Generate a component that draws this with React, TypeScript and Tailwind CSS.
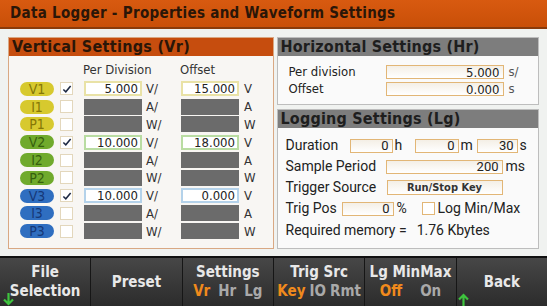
import React from 'react';

type Ch = {
  name: string;
  pill: string;
  text: string;
  ring: string;
  checked: boolean;
  per?: string;
  off?: string;
  unit: string;
};

const rows: Ch[] = [
  { name: 'V1', pill: 'bg-[#d7c92e]', text: 'text-[#857706]', ring: 'border-[#e9e2a6]', checked: true, per: '5.000', off: '15.000', unit: 'V' },
  { name: 'I1', pill: 'bg-[#d7c92e]', text: 'text-[#857706]', ring: '', checked: false, unit: 'A' },
  { name: 'P1', pill: 'bg-[#d7c92e]', text: 'text-[#857706]', ring: '', checked: false, unit: 'W' },
  { name: 'V2', pill: 'bg-[#70aa2c]', text: 'text-[#36600e]', ring: 'border-[#b9dca2]', checked: true, per: '10.000', off: '18.000', unit: 'V' },
  { name: 'I2', pill: 'bg-[#70aa2c]', text: 'text-[#36600e]', ring: '', checked: false, unit: 'A' },
  { name: 'P2', pill: 'bg-[#70aa2c]', text: 'text-[#36600e]', ring: '', checked: false, unit: 'W' },
  { name: 'V3', pill: 'bg-[#2f6ec0]', text: 'text-[#163877]', ring: 'border-[#b4d2ea]', checked: true, per: '10.000', off: '0.000', unit: 'V' },
  { name: 'I3', pill: 'bg-[#2f6ec0]', text: 'text-[#163877]', ring: '', checked: false, unit: 'A' },
  { name: 'P3', pill: 'bg-[#2f6ec0]', text: 'text-[#163877]', ring: '', checked: false, unit: 'W' },
];

const narrow = { fontFamily: '"DejaVu Sans Condensed", "DejaVu Sans", sans-serif' };

function Check() {
  return (
    <svg width="10" height="10" viewBox="0 0 11 11">
      <path d="M1.5 6 L4.2 8.6 L9.5 2.2" fill="none" stroke="#1e2a44" strokeWidth="1.7" />
    </svg>
  );
}

function Box({ checked, className = '' }: { checked?: boolean; className?: string }) {
  return (
    <div className={`w-[13px] h-[13px] bg-white border border-[#e3d7bc] flex items-center justify-center ${className}`}>
      {checked && <Check />}
    </div>
  );
}

function Field({ value, className = '' }: { value: string; className?: string }) {
  return (
    <div className={`h-[14px] bg-gradient-to-b from-[#f4efe6] to-white border border-[#e2b676] flex items-center justify-end pr-[3px] text-[13px] leading-none text-[#222] ${className}`}>
      {value}
    </div>
  );
}

function SoftKey({ top, bottom, children }: { top: string; bottom?: string; children?: React.ReactNode }) {
  return (
    <div className="relative flex-1 flex flex-col items-center justify-center bg-gradient-to-b from-[#474747] to-[#2c2c2c] border-l border-[#161616] first:border-l-0 font-bold text-[15px] leading-[19px] text-[#e8e8e8]">
      <div>{top}</div>
      {bottom && <div>{bottom}</div>}
      {children}
    </div>
  );
}

export default function App() {
  return (
    <div className="w-[547px] h-[306px] flex flex-col overflow-hidden bg-[#f0f2f0] text-[#222]" style={narrow}>
      <div className="h-[29px] shrink-0 bg-gradient-to-b from-[#d85a10] to-[#c94f08] border-b-2 border-[#8a3a0a] flex items-center px-[10px]">
        <span className="font-bold text-[15px] text-[#2a1608] tracking-[0.3px]">Data Logger - Properties and Waveform Settings</span>
      </div>

      <div className="flex-1 flex gap-[3px] px-[8px] pt-[8px]">
        <div className="w-[266px] h-[212px] border border-[#d9a883] bg-[#f8f6f3] flex flex-col">
          <div className="h-[18px] bg-[#c64d0e] flex items-center px-[3px] font-bold text-[16px] tracking-[0.3px] text-[#2a1608]">Vertical Settings (Vr)</div>
          <div className="flex h-[24px] items-end pb-[1px] text-[13px] text-[#333]">
            <div className="ml-[74px] w-[97px]">Per Division</div>
            <div>Offset</div>
          </div>
          <div className="flex flex-col">
            {rows.map((r) => (
              <div key={r.name} className="h-[17.8px] flex items-center">
                <div className={`ml-[11px] w-[34px] h-[14px] rounded-full ${r.pill} ${r.text} flex items-center justify-center text-[14px] leading-none`}>{r.name}</div>
                <Box checked={r.checked} className="ml-[6px]" />
                {r.per ? (
                  <div className={`ml-[11px] w-[58px] h-[15px] bg-white border-2 ${r.ring} flex items-center justify-end pr-[2px] text-[13px] leading-none`}>{r.per}</div>
                ) : (
                  <div className="ml-[11px] w-[58px] h-[16px] bg-[#6b6b6b]" />
                )}
                <div className="w-[39px] pl-[4px] text-[13px] leading-none text-[#333]">{r.unit}/</div>
                {r.off ? (
                  <div className={`w-[58px] h-[15px] bg-white border-2 ${r.ring} flex items-center justify-end pr-[2px] text-[13px] leading-none`}>{r.off}</div>
                ) : (
                  <div className="w-[58px] h-[16px] bg-[#6b6b6b]" />
                )}
                <div className="pl-[5px] text-[13px] leading-none text-[#333]">{r.unit}</div>
              </div>
            ))}
          </div>
        </div>

        <div className="w-[263px] flex flex-col gap-[4px]">
          <div className="h-[68px] border border-[#bdbdbd] bg-[#fafafa] flex flex-col">
            <div className="h-[18px] bg-[#7d7d7d] flex items-center px-[3px] font-bold text-[16px] tracking-[0.2px] text-[#1e1e1e]">Horizontal Settings (Hr)</div>
            <div className="flex flex-col pt-[9px] gap-[3px] text-[13px]">
              <div className="flex items-center h-[14px]">
                <div className="w-[108px] pl-[11px]">Per division</div>
                <Field value="5.000" className="w-[118px]" />
                <div className="pl-[5px] text-[#555]">s/</div>
              </div>
              <div className="flex items-center h-[14px]">
                <div className="w-[108px] pl-[11px]">Offset</div>
                <Field value="0.000" className="w-[118px]" />
                <div className="pl-[5px] text-[#555]">s</div>
              </div>
            </div>
          </div>

          <div className="h-[140px] border border-[#bdbdbd] bg-[#fafafa] flex flex-col text-[14px]" style={{ fontFamily: 'Roboto, "DejaVu Sans", sans-serif' }}>
            <div className="h-[18px] bg-[#7d7d7d] flex items-center px-[3px] font-bold text-[16px] tracking-[0.2px] text-[#1e1e1e]" style={narrow}>Logging Settings (Lg)</div>
            <div className="flex flex-col pt-[10px] pl-[8px] gap-[6px]">
              <div className="flex items-center h-[15px]">
                <div className="w-[64px]">Duration</div>
                <Field value="0" className="w-[43px]" />
                <div className="w-[22px] pl-[2px]">h</div>
                <Field value="0" className="w-[44px]" />
                <div className="w-[18px] pl-[2px]">m</div>
                <Field value="30" className="w-[41px]" />
                <div className="pl-[2px]">s</div>
              </div>
              <div className="flex items-center h-[15px]">
                <div className="w-[100px]">Sample Period</div>
                <Field value="200" className="w-[117px]" />
                <div className="pl-[3px]">ms</div>
              </div>
              <div className="flex items-center h-[15px]">
                <div className="w-[101px]">Trigger Source</div>
                <div className="w-[116px] h-[15px] bg-gradient-to-b from-[#f4efe6] to-white border border-[#e2b676] flex items-center justify-center text-[11px] font-bold leading-none text-[#333]" style={narrow}>Run/Stop Key</div>
              </div>
              <div className="flex items-center h-[15px]">
                <div className="w-[56px]">Trig Pos</div>
                <Field value="0" className="w-[52px]" />
                <div className="w-[28px] pl-[3px]">%</div>
                <div className="w-[13px] h-[13px] bg-white border border-[#e2b676]" />
                <div className="pl-[3px]">Log Min/Max</div>
              </div>
              <div className="flex items-center h-[17px]">
                <div>Required memory =</div>
                <div className="pl-[10px]">1.76 Kbytes</div>
              </div>
            </div>
          </div>
        </div>
      </div>

      <div className="h-[50px] shrink-0 flex border-t-2 border-[#111] bg-[#2a2a2a]">
        <SoftKey top="File" bottom="Selection">
          <svg className="absolute left-[3px] bottom-0" width="11" height="13" viewBox="0 0 11 13">
            <path d="M5.5 0 V11 M1 6.5 L5.5 11 L10 6.5" fill="none" stroke="#3ec43e" strokeWidth="2.2" />
          </svg>
        </SoftKey>
        <SoftKey top="Preset" />
        <SoftKey top="Settings">
          <div className="flex gap-[8px]">
            <span className="text-[#f08a1c]">Vr</span>
            <span className="text-[#a9a9a9]">Hr</span>
            <span className="text-[#a9a9a9]">Lg</span>
          </div>
        </SoftKey>
        <SoftKey top="Trig Src">
          <div className="flex gap-[4px]">
            <span className="text-[#f08a1c]">Key</span>
            <span className="text-[#a9a9a9]">IO</span>
            <span className="text-[#a9a9a9]">Rmt</span>
          </div>
        </SoftKey>
        <SoftKey top="Lg MinMax">
          <div className="flex gap-[18px]">
            <span className="text-[#f08a1c]">Off</span>
            <span className="text-[#a9a9a9]">On</span>
          </div>
        </SoftKey>
        <SoftKey top="Back">
          <svg className="absolute left-[1px] bottom-0" width="11" height="13" viewBox="0 0 11 13">
            <path d="M5.5 13 V2 M1 6.5 L5.5 2 L10 6.5" fill="none" stroke="#3ec43e" strokeWidth="2.2" />
          </svg>
        </SoftKey>
      </div>
    </div>
  );
}
